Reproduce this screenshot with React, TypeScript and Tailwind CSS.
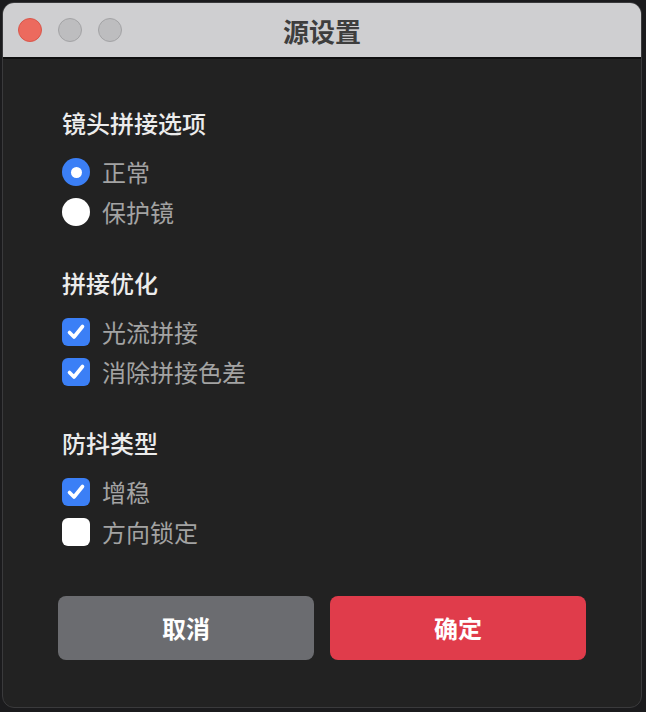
import { useState } from 'react';

const font = { fontFamily: '"Noto Sans CJK SC", "Noto Sans", sans-serif' };

// 单选按钮
const Radio = ({ checked, label, onClick }: { checked: boolean; label: string; onClick: () => void }) => (
  <button type="button" onClick={onClick} className="flex h-10 items-center gap-3 text-left">
    {checked ? (
      <span className="flex h-7 w-7 items-center justify-center rounded-full bg-[#3b7ff6]">
        <span className="h-[11px] w-[11px] rounded-full bg-white" />
      </span>
    ) : (
      <span className="h-7 w-7 rounded-full bg-white" />
    )}
    <span className="text-[24px] leading-none text-[#a3a3a3]">{label}</span>
  </button>
);

// 复选框
const Checkbox = ({ checked, label, onClick }: { checked: boolean; label: string; onClick: () => void }) => (
  <button type="button" onClick={onClick} className="flex h-10 items-center gap-3 text-left">
    {checked ? (
      <span className="flex h-7 w-7 items-center justify-center rounded-[6px] bg-[#3b7ff6]">
        <svg width="22" height="22" viewBox="0 0 22 22" fill="none">
          <path d="M4.5 11.5 L9 16 L17.5 5.5" stroke="white" strokeWidth="3.6" strokeLinecap="round" strokeLinejoin="round" />
        </svg>
      </span>
    ) : (
      <span className="h-7 w-7 rounded-[6px] bg-white" />
    )}
    <span className="text-[24px] leading-none text-[#a3a3a3]">{label}</span>
  </button>
);

const SectionTitle = ({ children }: { children: string }) => (
  <h2 className="mb-[13px] text-[24px] leading-8 font-medium text-[#ececec]">{children}</h2>
);

function App() {
  const [mode, setMode] = useState<'normal' | 'lens'>('normal');
  const [flow, setFlow] = useState(true);
  const [color, setColor] = useState(true);
  const [stable, setStable] = useState(true);
  const [lock, setLock] = useState(false);

  return (
    <div className="min-h-screen bg-[#1b1b1d] pt-[2px] pl-[2px]" style={font}>
      <div className="flex h-[706px] w-[640px] flex-col overflow-hidden rounded-[12px] border border-[#3a3a3c] bg-[#222222]">
        {/* 标题栏 */}
        <div className="relative flex h-[56px] shrink-0 items-center justify-center border-b-2 border-[#0f0f0f] bg-[#cfcfd1]">
          <div className="absolute top-[15px] left-[15px] flex gap-4">
            <span className="h-6 w-6 rounded-full border border-[#d9574b] bg-[#ec6a5e]" />
            <span className="h-6 w-6 rounded-full border border-[#a3a3a5] bg-[#bdbdbf]" />
            <span className="h-6 w-6 rounded-full border border-[#a3a3a5] bg-[#bdbdbf]" />
          </div>
          <h1 className="text-[26px] font-bold text-[#3e3e3e]">源设置</h1>
        </div>

        <div className="flex flex-1 flex-col pt-[48px]">
          <div className="flex flex-col gap-[35px] pl-[59px]">
            <section>
              <SectionTitle>镜头拼接选项</SectionTitle>
              <div className="flex flex-col">
                <Radio checked={mode === 'normal'} label="正常" onClick={() => setMode('normal')} />
                <Radio checked={mode === 'lens'} label="保护镜" onClick={() => setMode('lens')} />
              </div>
            </section>

            <section>
              <SectionTitle>拼接优化</SectionTitle>
              <div className="flex flex-col">
                <Checkbox checked={flow} label="光流拼接" onClick={() => setFlow(!flow)} />
                <Checkbox checked={color} label="消除拼接色差" onClick={() => setColor(!color)} />
              </div>
            </section>

            <section>
              <SectionTitle>防抖类型</SectionTitle>
              <div className="flex flex-col">
                <Checkbox checked={stable} label="增稳" onClick={() => setStable(!stable)} />
                <Checkbox checked={lock} label="方向锁定" onClick={() => setLock(!lock)} />
              </div>
            </section>
          </div>

          <div className="mt-[44px] grid grid-cols-2 gap-4 px-[55px]">
            <button type="button" className="h-16 rounded-[8px] bg-[#6b6c70] text-[24px] font-bold text-white">取消</button>
            <button type="button" className="h-16 rounded-[8px] bg-[#e03c4b] text-[24px] font-bold text-white">确定</button>
          </div>
        </div>
      </div>
    </div>
  );
}

export default App;
